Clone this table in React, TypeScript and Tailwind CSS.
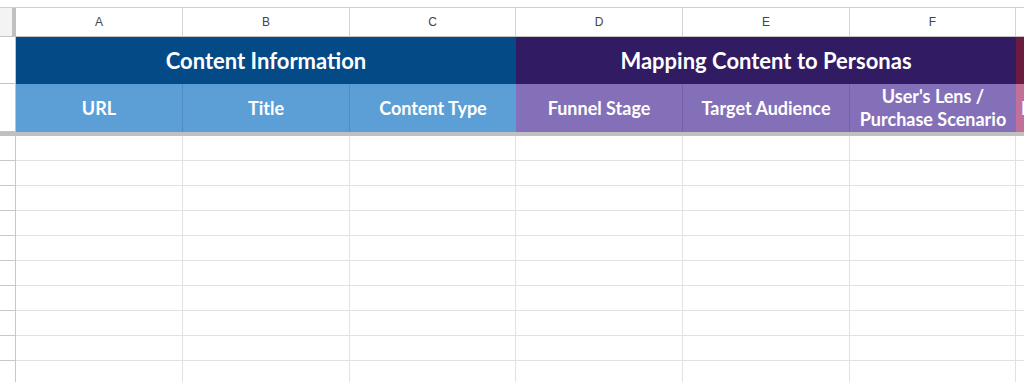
const cols = "grid grid-cols-[16px_167px_167px_166px_167px_167px_166px_167px]";
const letters = ["A", "B", "C", "D", "E", "F", "G"];

function HeaderCell({ children, className }: { children?: React.ReactNode; className: string }) {
  return (
    <div className={`flex items-center justify-center text-center font-bold text-white ${className}`}>
      {children}
    </div>
  );
}

export default function App() {
  return (
    <div className="h-[382px] w-[1024px] overflow-hidden bg-white font-['Lato',sans-serif]">
      <div className="w-[1183px]">
        {/* toolbar remnant */}
        <div className="h-[8px] border-b border-[#cfcfcf]" />

        {/* column letters */}
        <div className={`${cols} h-[29px] border-b border-[#c4c4c4]`}>
          <div className="flex">
            <div className="w-[12px] bg-[#f3f3f3]" />
            <div className="w-[4px] bg-[#c0c0c0]" />
          </div>
          {letters.map((l) => (
            <div
              key={l}
              className="flex items-center justify-center border-r border-[#d4d4d4] font-['Liberation_Sans',sans-serif] text-[12px] text-[#444]"
            >
              {l}
            </div>
          ))}
        </div>

        {/* group header row */}
        <div className={`${cols} h-[47px]`}>
          <div className="border-r border-b border-[#c4c4c4]" />
          <HeaderCell className="col-span-3 bg-[#034a86] text-[22px]">Content Information</HeaderCell>
          <HeaderCell className="col-span-3 bg-[#311b63] text-[22px]">Mapping Content to Personas</HeaderCell>
          <div className="bg-[#6b1a40]" />
        </div>

        {/* field header row */}
        <div className={`${cols} h-[48px]`}>
          <div className="border-r border-b border-[#c4c4c4]" />
          <HeaderCell className="border-r border-[#4f8cc3] bg-[#5c9fd6] text-[18px]">URL</HeaderCell>
          <HeaderCell className="border-r border-[#4f8cc3] bg-[#5c9fd6] text-[18px]">Title</HeaderCell>
          <HeaderCell className="bg-[#5c9fd6] text-[18px]">Content Type</HeaderCell>
          <HeaderCell className="border-r border-[#7461a8] bg-[#8470b8] text-[18px]">Funnel Stage</HeaderCell>
          <HeaderCell className="border-r border-[#7461a8] bg-[#8470b8] text-[18px]">Target Audience</HeaderCell>
          <HeaderCell className="bg-[#8470b8] text-[18px] leading-[23px]">
            User's Lens /<br />
            Purchase Scenario
          </HeaderCell>
          <div className="flex items-center overflow-hidden whitespace-nowrap bg-[#c2709a] pl-[5px] text-[18px] font-bold text-white">
            Pain Points
          </div>
        </div>

        {/* frozen divider */}
        <div className="h-[4px] bg-[#c0c0c0]" />

        {/* empty rows */}
        {Array.from({ length: 10 }).map((_, r) => (
          <div key={r} className={`${cols} h-[25px]`}>
            <div className="border-r border-b border-[#c8c8c8]" />
            {letters.map((l) => (
              <div key={l} className="border-r border-b border-[#e2e2e2]" />
            ))}
          </div>
        ))}
      </div>
    </div>
  );
}
